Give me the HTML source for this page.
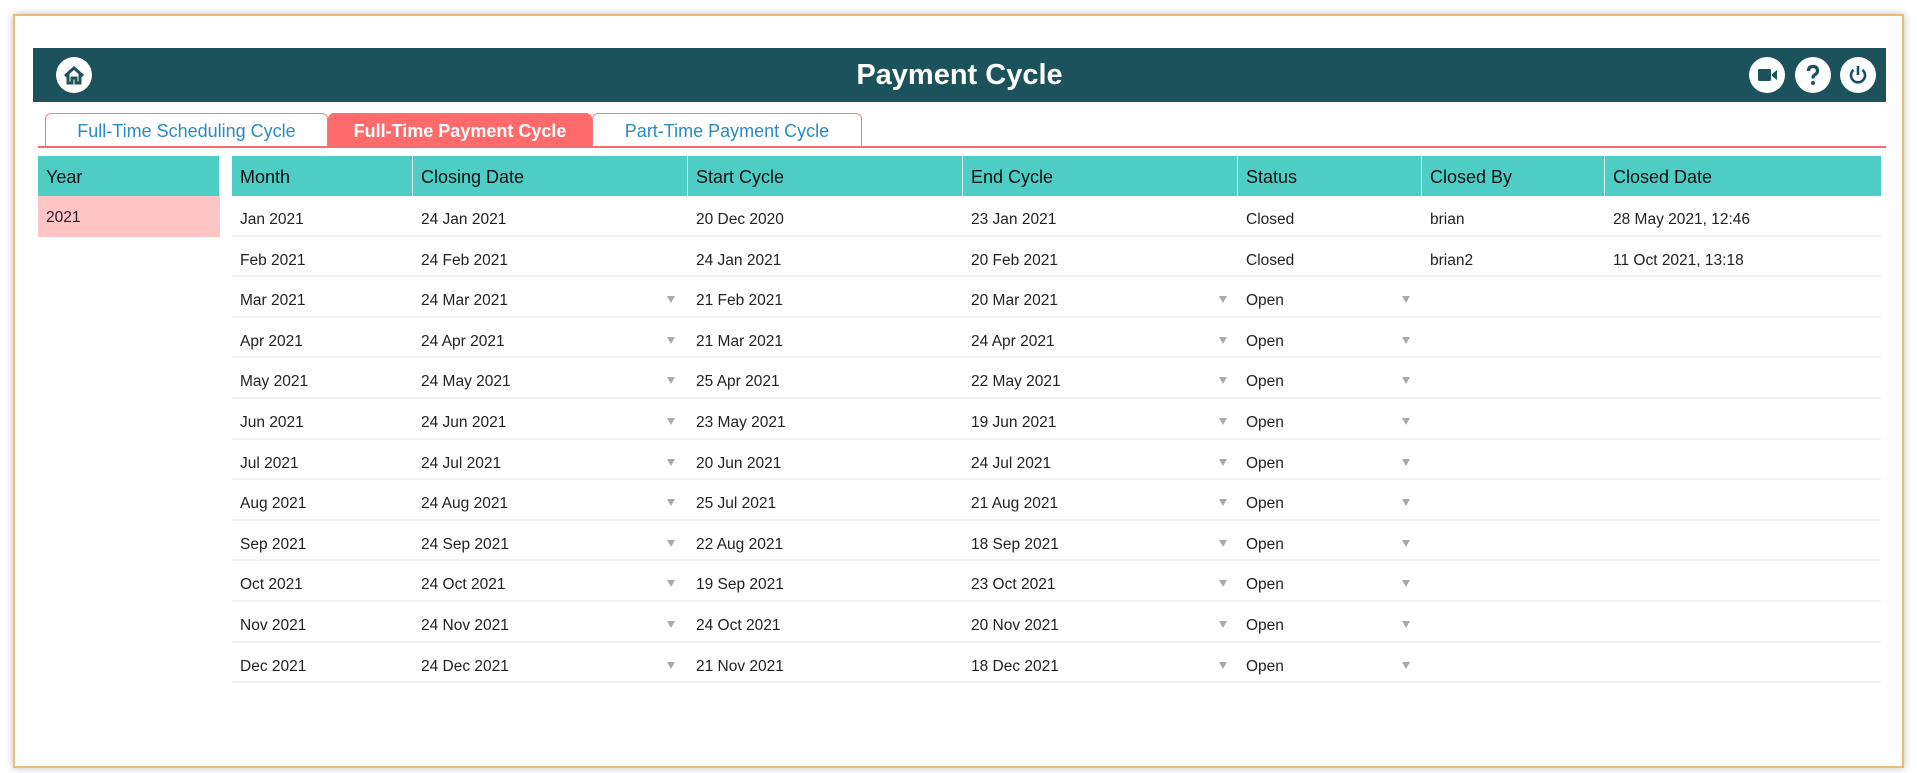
<!DOCTYPE html>
<html><head><meta charset="utf-8"><style>
*{box-sizing:border-box;margin:0;padding:0}
body{width:1917px;height:773px;background:#fff;font-family:"Liberation Sans",sans-serif;position:relative;overflow:hidden}
.frame{position:absolute;left:13px;top:14px;width:1891px;height:754px;border:2px solid #e8bd7a;box-shadow:0 0 8px rgba(0,0,0,.25);background:#fff}
.hdr{position:absolute;left:33px;top:48px;width:1853px;height:54px;background:#1c525c}
.title{position:absolute;left:0;right:0;top:0;line-height:54px;text-align:center;color:#fff;font-size:29px;font-weight:bold}
.ic{position:absolute;top:57px;width:36px;height:36px;border-radius:50%;background:#fff}
.ic svg{position:absolute;left:0;top:0}
.tab{position:absolute;top:113px;height:35px;border:1px solid #f08080;border-bottom:none;border-radius:6px 6px 0 0;color:#2a8bbf;font-size:18px;text-align:center;line-height:34px;background:#fff}
.tab.act{background:#ff6b6b;color:#fff;font-weight:bold;border-color:#ff6b6b}
.rl{position:absolute;left:38px;top:146px;width:1848px;height:2px;background:#f26d6d}
.th{position:absolute;top:156px;height:40px;background:#4ecdc4;color:#111;font-size:18px;line-height:42px;padding-left:8px;border-right:1px solid #e0f5f3}
.row{position:absolute;left:232px;width:1649px;height:40.6px;border-bottom:2px solid #f1f1f1;font-size:15.5px;color:#222}
.row span{position:absolute;line-height:40px;top:4px}
.ar{position:absolute;top:19px;width:0;height:0;border-left:4px solid transparent;border-right:4px solid transparent;border-top:7px solid #aaa}
</style></head><body>
<div class="frame"></div>
<div class="hdr"><div class="title">Payment Cycle</div></div>
<div class="ic" style="left:56px"><svg width="36" height="36" viewBox="0 0 36 36"><path d="M9 19 L18 11 L27 19 M12 17 V26 H16 V21 H20 V26 H24 V17" fill="none" stroke="#1c525c" stroke-width="3"/></svg></div>
<div class="ic" style="left:1749px"><svg width="36" height="36" viewBox="0 0 36 36"><rect x="9" y="12" width="13" height="12" rx="1.5" fill="#1c525c"/><path d="M23 17 L28 13 V23 L23 19Z" fill="#1c525c"/></svg></div>
<div class="ic" style="left:1795px"><svg width="36" height="36" viewBox="0 0 36 36"><path d="M13.5 14 Q13.5 9.5 18 9.5 Q22.5 9.5 22.5 14 Q22.5 16.5 19.5 18 Q18 19 18 21.5" fill="none" stroke="#1c525c" stroke-width="3.2"/><circle cx="18" cy="26" r="2" fill="#1c525c"/></svg></div>
<div class="ic" style="left:1840px"><svg width="36" height="36" viewBox="0 0 36 36"><path d="M13.5 13 A7 7 0 1 0 22.5 13" fill="none" stroke="#1c525c" stroke-width="2.6"/><path d="M18 9 V18" stroke="#1c525c" stroke-width="2.6"/></svg></div>
<div class="tab" style="left:45px;width:283px">Full-Time Scheduling Cycle</div>
<div class="tab act" style="left:328px;width:264px">Full-Time Payment Cycle</div>
<div class="tab" style="left:592px;width:270px">Part-Time Payment Cycle</div>
<div class="rl"></div>
<div class="th" style="left:38px;width:182px">Year</div>
<div style="position:absolute;left:38px;top:196px;width:182px;height:41px;background:#ffc5c5;font-size:15.5px;line-height:44px;padding-left:8px;color:#222">2021</div>
<div class="th" style="left:232px;width:181px">Month</div>
<div class="th" style="left:413px;width:275px">Closing Date</div>
<div class="th" style="left:688px;width:275px">Start Cycle</div>
<div class="th" style="left:963px;width:275px">End Cycle</div>
<div class="th" style="left:1238px;width:184px">Status</div>
<div class="th" style="left:1422px;width:183px">Closed By</div>
<div class="th" style="left:1605px;width:276px;border-right:none">Closed Date</div>
<div class="row" style="top:196px"><span style="left:8px">Jan 2021</span><span style="left:189px">24 Jan 2021</span><span style="left:464px">20 Dec 2020</span><span style="left:739px">23 Jan 2021</span><span style="left:1014px">Closed</span><span style="left:1198px">brian</span><span style="left:1381px">28 May 2021, 12:46</span></div>
<div class="row" style="top:236.6px"><span style="left:8px">Feb 2021</span><span style="left:189px">24 Feb 2021</span><span style="left:464px">24 Jan 2021</span><span style="left:739px">20 Feb 2021</span><span style="left:1014px">Closed</span><span style="left:1198px">brian2</span><span style="left:1381px">11 Oct 2021, 13:18</span></div>
<div class="row" style="top:277.2px"><span style="left:8px">Mar 2021</span><span style="left:189px">24 Mar 2021</span><i class="ar" style="left:435px"></i><span style="left:464px">21 Feb 2021</span><span style="left:739px">20 Mar 2021</span><i class="ar" style="left:987px"></i><span style="left:1014px">Open</span><i class="ar" style="left:1170px"></i></div>
<div class="row" style="top:317.8px"><span style="left:8px">Apr 2021</span><span style="left:189px">24 Apr 2021</span><i class="ar" style="left:435px"></i><span style="left:464px">21 Mar 2021</span><span style="left:739px">24 Apr 2021</span><i class="ar" style="left:987px"></i><span style="left:1014px">Open</span><i class="ar" style="left:1170px"></i></div>
<div class="row" style="top:358.4px"><span style="left:8px">May 2021</span><span style="left:189px">24 May 2021</span><i class="ar" style="left:435px"></i><span style="left:464px">25 Apr 2021</span><span style="left:739px">22 May 2021</span><i class="ar" style="left:987px"></i><span style="left:1014px">Open</span><i class="ar" style="left:1170px"></i></div>
<div class="row" style="top:399px"><span style="left:8px">Jun 2021</span><span style="left:189px">24 Jun 2021</span><i class="ar" style="left:435px"></i><span style="left:464px">23 May 2021</span><span style="left:739px">19 Jun 2021</span><i class="ar" style="left:987px"></i><span style="left:1014px">Open</span><i class="ar" style="left:1170px"></i></div>
<div class="row" style="top:439.6px"><span style="left:8px">Jul 2021</span><span style="left:189px">24 Jul 2021</span><i class="ar" style="left:435px"></i><span style="left:464px">20 Jun 2021</span><span style="left:739px">24 Jul 2021</span><i class="ar" style="left:987px"></i><span style="left:1014px">Open</span><i class="ar" style="left:1170px"></i></div>
<div class="row" style="top:480.2px"><span style="left:8px">Aug 2021</span><span style="left:189px">24 Aug 2021</span><i class="ar" style="left:435px"></i><span style="left:464px">25 Jul 2021</span><span style="left:739px">21 Aug 2021</span><i class="ar" style="left:987px"></i><span style="left:1014px">Open</span><i class="ar" style="left:1170px"></i></div>
<div class="row" style="top:520.8px"><span style="left:8px">Sep 2021</span><span style="left:189px">24 Sep 2021</span><i class="ar" style="left:435px"></i><span style="left:464px">22 Aug 2021</span><span style="left:739px">18 Sep 2021</span><i class="ar" style="left:987px"></i><span style="left:1014px">Open</span><i class="ar" style="left:1170px"></i></div>
<div class="row" style="top:561.4px"><span style="left:8px">Oct 2021</span><span style="left:189px">24 Oct 2021</span><i class="ar" style="left:435px"></i><span style="left:464px">19 Sep 2021</span><span style="left:739px">23 Oct 2021</span><i class="ar" style="left:987px"></i><span style="left:1014px">Open</span><i class="ar" style="left:1170px"></i></div>
<div class="row" style="top:602px"><span style="left:8px">Nov 2021</span><span style="left:189px">24 Nov 2021</span><i class="ar" style="left:435px"></i><span style="left:464px">24 Oct 2021</span><span style="left:739px">20 Nov 2021</span><i class="ar" style="left:987px"></i><span style="left:1014px">Open</span><i class="ar" style="left:1170px"></i></div>
<div class="row" style="top:642.6px"><span style="left:8px">Dec 2021</span><span style="left:189px">24 Dec 2021</span><i class="ar" style="left:435px"></i><span style="left:464px">21 Nov 2021</span><span style="left:739px">18 Dec 2021</span><i class="ar" style="left:987px"></i><span style="left:1014px">Open</span><i class="ar" style="left:1170px"></i></div>
</body></html>
